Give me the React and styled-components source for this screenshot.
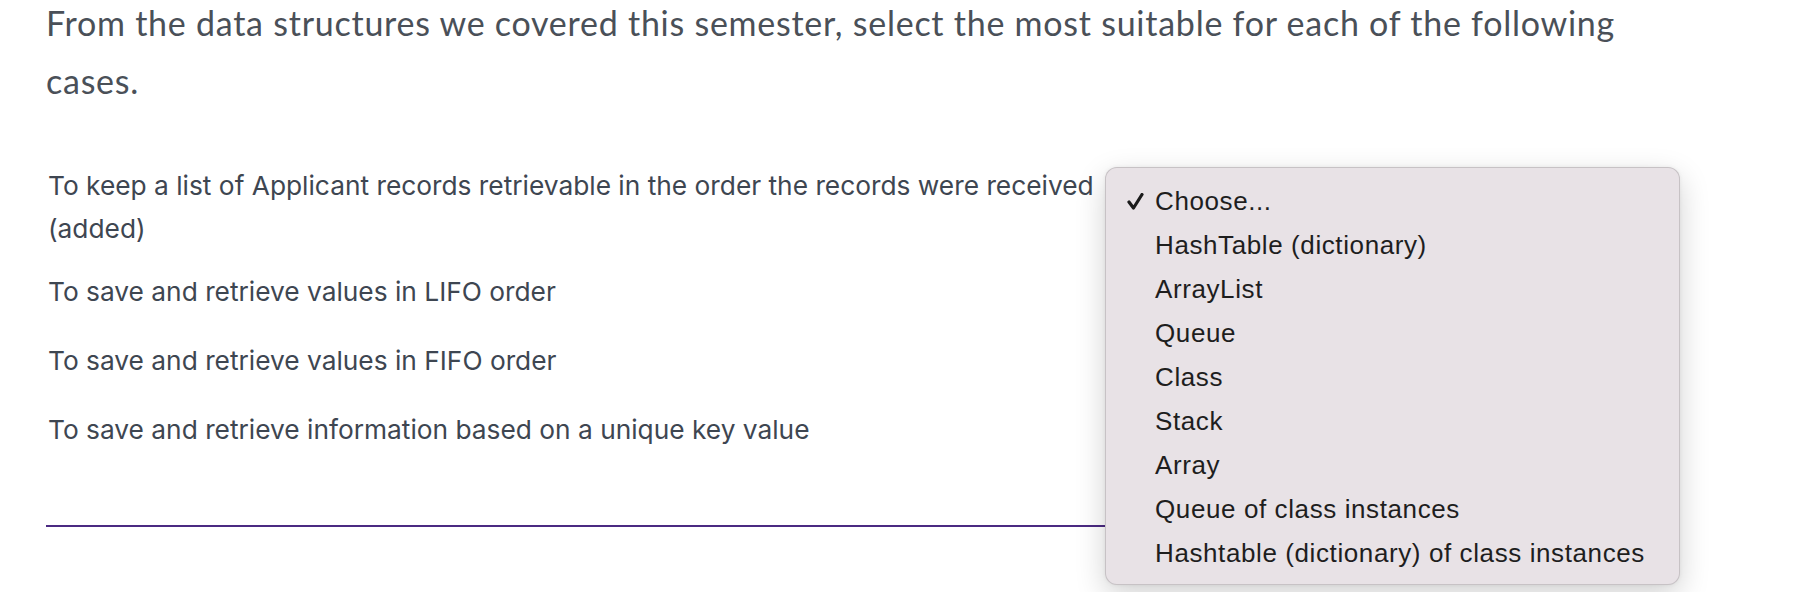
import React from "react";
import styled, { createGlobalStyle } from "styled-components";

const GlobalStyle = createGlobalStyle`
  html, body {
    margin: 0;
    padding: 0;
    background: #ffffff;
    overflow: hidden;
  }
`;

const cases = [
  "To keep a list of Applicant records retrievable in the order the records were received (added)",
  "To save and retrieve values in LIFO order",
  "To save and retrieve values in FIFO order",
  "To save and retrieve information based on a unique key value",
];

const options = [
  "Choose...",
  "HashTable (dictionary)",
  "ArrayList",
  "Queue",
  "Class",
  "Stack",
  "Array",
  "Queue of class instances",
  "Hashtable (dictionary) of class instances",
];

export default function App() {
  return (
    <>
      <GlobalStyle />
      <Page>
        <Prompt>
          From the data structures we covered this semester, select the most
          suitable for each of the following cases.
        </Prompt>
        <MatchBlock>
          {cases.map((text, i) => (
            <CaseRow key={i}>
              <CaseLabel>{text}</CaseLabel>
              <SelectCell>
                <SelectBox />
                {i === 0 && (
                  <Menu>
                    {options.map((opt, j) => (
                      <MenuItem key={opt}>
                        <CheckSlot>
                          {j === 0 && (
                            <svg width="17" height="17" viewBox="0 0 17 17">
                              <path
                                d="M2 9 L6.5 15 L15 1.5"
                                fill="none"
                                stroke="#1b1b1b"
                                strokeWidth="3.2"
                                strokeLinecap="round"
                                strokeLinejoin="round"
                              />
                            </svg>
                          )}
                        </CheckSlot>
                        {opt}
                      </MenuItem>
                    ))}
                  </Menu>
                )}
              </SelectCell>
            </CaseRow>
          ))}
        </MatchBlock>
      </Page>
    </>
  );
}

const Page = styled.div`
  padding: 0 0 0 46px;
  width: 1808px;
  height: 598px;
  box-sizing: border-box;
`;

const Prompt = styled.h2`
  margin: -6px 0 47px;
  width: 1600px;
  font-family: "Lato", "Open Sans", sans-serif;
  font-weight: 400;
  font-size: 34px;
  line-height: 58px;
  letter-spacing: 0.75px;
  color: #4a5058;
`;

const MatchBlock = styled.div`
  width: 1400px;
  padding-bottom: 60px;
  border-bottom: 2px solid #4b2a82;
`;

const CaseRow = styled.div`
  display: flex;
  align-items: center;
  padding: 8px 0;
`;

const CaseLabel = styled.div`
  width: 1062px;
  padding-left: 2px;
  font-family: "Inter", "Liberation Sans", sans-serif;
  font-size: 26.3px;
  line-height: 42.5px;
  color: #3e4651;
`;

const SelectCell = styled.div`
  position: relative;
  margin-left: 6px;
`;

const SelectBox = styled.div`
  width: 300px;
  height: 53px;
  border: 1px solid #c9c9c9;
  border-radius: 6px;
  box-sizing: border-box;
`;

const Menu = styled.div`
  position: absolute;
  left: -11px;
  top: -14px;
  width: 575px;
  height: 418px;
  box-sizing: border-box;
  padding: 11px 0;
  background: #e8e2e6;
  border: 1px solid rgba(0, 0, 0, 0.14);
  border-radius: 12px;
  box-shadow: 0 10px 30px rgba(0, 0, 0, 0.18), 0 0 4px rgba(0, 0, 0, 0.06);
  z-index: 10;
`;

const MenuItem = styled.div`
  display: flex;
  align-items: center;
  height: 44px;
  padding-left: 21px;
  font-family: "Liberation Sans", "Arial", sans-serif;
  font-size: 26px;
  letter-spacing: 0.6px;
  color: #1e1e1e;
  white-space: nowrap;
`;

const CheckSlot = styled.span`
  display: inline-flex;
  align-items: center;
  width: 28px;
`;
